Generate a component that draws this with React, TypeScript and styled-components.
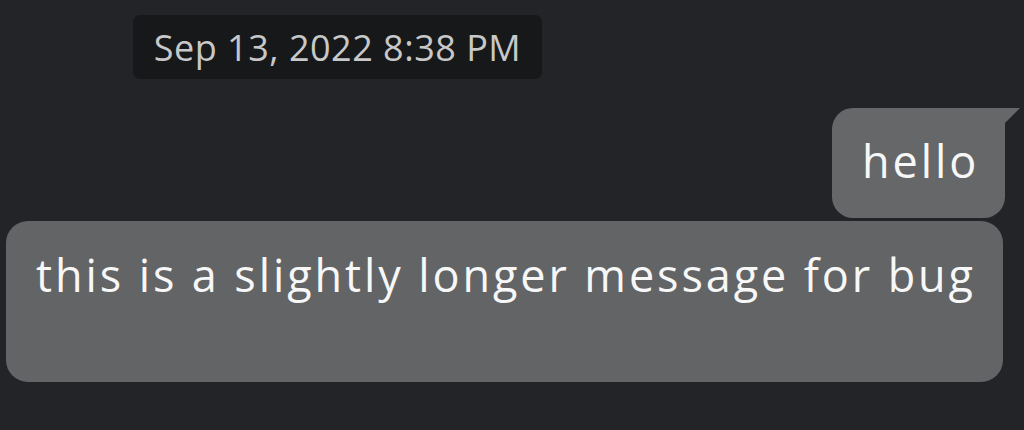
import React from "react";
import styled, { createGlobalStyle } from "styled-components";

const Global = createGlobalStyle`
  html, body { margin: 0; padding: 0; background: #232427; }
  body { font-family: "Open Sans", Lato, sans-serif; }
`;

const Screen = styled.div`
  width: 1024px;
  height: 430px;
  background: #232427;
  display: flex;
  flex-direction: column;
  box-sizing: border-box;
  padding-top: 15px;
  overflow: hidden;
`;

const Stamp = styled.div`
  align-self: flex-start;
  margin-left: 133px;
  width: 409px;
  height: 64px;
  box-sizing: border-box;
  background: #17181a;
  border-radius: 7px;
  color: #c8c8c9;
  font-size: 36px;
  display: flex;
  align-items: center;
  justify-content: center;
  letter-spacing: 0.5px;
`;

const Bubble = styled.div<{ $outgoing?: boolean }>`
  position: relative;
  box-sizing: border-box;
  background: #666769;
  color: #f7f7f7;
  font-size: 45px;
  letter-spacing: 2.9px;
  display: flex;
  align-items: ${(p) => (p.$outgoing ? "center" : "flex-start")};
  border-radius: ${(p) => (p.$outgoing ? "21px 0 21px 21px" : "22px")};
  ${(p) =>
    p.$outgoing
      ? `
    align-self: flex-end;
    margin: 29px 19px 0 0;
    width: 173px;
    height: 110px;
    padding: 0 0 6px 30px;
    &::after {
      content: "";
      position: absolute;
      top: 0;
      right: -15px;
      width: 15px;
      height: 15px;
      background: #666769;
      clip-path: polygon(0 0, 100% 0, 0 100%);
    }
  `
      : `
    margin: 3px 21px 0 6px;
    height: 161px;
    padding: 23px 0 0 30px;
    background: #636466;
  `}
`;

export default function App() {
  return (
    <>
      <Global />
      <Screen>
        <Stamp>Sep 13, 2022 8:38 PM</Stamp>
        <Bubble $outgoing>hello</Bubble>
        <Bubble>this is a slightly longer message for bug</Bubble>
      </Screen>
    </>
  );
}
